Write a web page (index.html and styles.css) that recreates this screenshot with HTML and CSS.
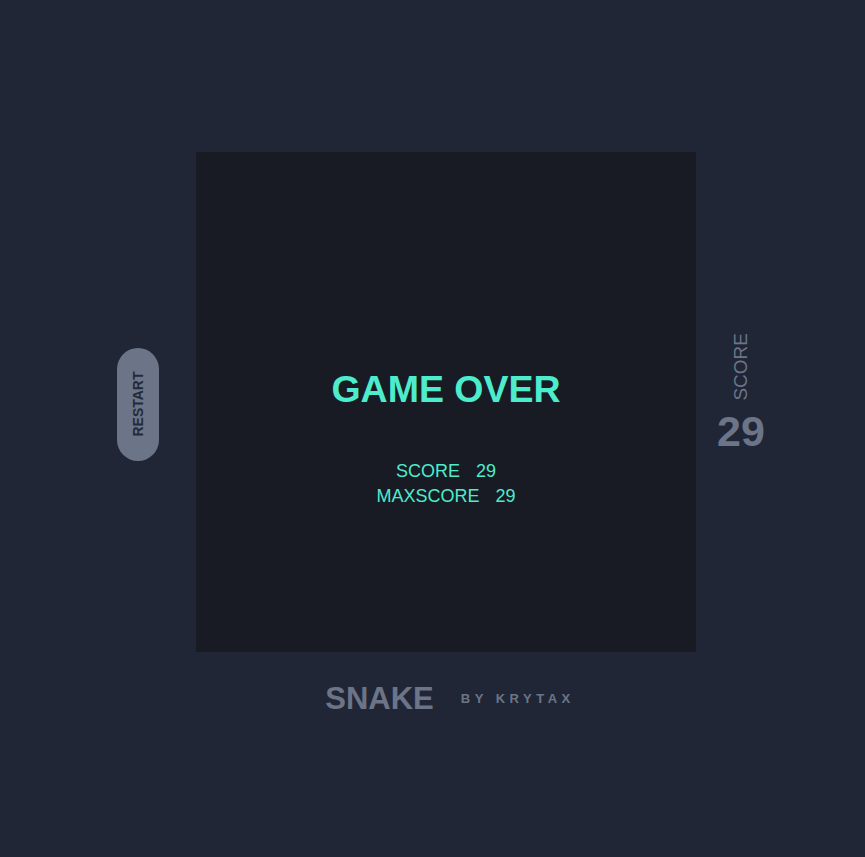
FILE: index.html
```html
<!DOCTYPE html>
<html>
<head>
<meta charset="utf-8">
<link rel="stylesheet" href="styles.css">
</head>
<body>
<div class="page">
  <div class="game">
    <div class="row">
      <div class="side-left">
        <button class="restart"><span>RESTART</span></button>
      </div>
      <div class="board">
        <div class="over">GAME OVER</div>
        <div class="stats">
          <div class="stat"><span>SCORE</span><span class="val">29</span></div>
          <div class="stat"><span>MAXSCORE</span><span class="val">29</span></div>
        </div>
      </div>
      <div class="side-right">
        <div class="score-label">SCORE</div>
        <div class="score-num">29</div>
      </div>
    </div>
    <div class="footer">
      <span class="title">SNAKE</span>
      <span class="by">BY KRYTAX</span>
    </div>
  </div>
</div>
</body>
</html>
```
FILE: styles.css
```css
html, body {
  margin: 0;
  padding: 0;
  height: 100%;
}
body {
  background: #212637;
  font-family: "Liberation Sans", Arial, sans-serif;
}
.page {
  height: 100%;
  display: flex;
  align-items: center;
  justify-content: center;
}
.game {
  display: flex;
  flex-direction: column;
  align-items: center;
  margin-left: 27px;
  margin-top: 10px;
}
.row {
  display: flex;
  align-items: center;
}
.side-left {
  width: 79px;
  display: flex;
  justify-content: flex-start;
  margin-left: -79px;
}
.restart {
  width: 42px;
  height: 113px;
  border: none;
  border-radius: 21px;
  background: #6b7587;
  color: #252a3a;
  font-family: "Liberation Sans", Arial, sans-serif;
  font-weight: bold;
  font-size: 14px;
  display: flex;
  align-items: center;
  justify-content: center;
  padding: 0;
  margin-top: 5px;
}
.restart span {
  transform: rotate(-90deg);
  white-space: nowrap;
}
.board {
  width: 500px;
  height: 500px;
  box-sizing: border-box;
  padding-top: 76px;
  background: #181a24;
  display: flex;
  flex-direction: column;
  align-items: center;
  justify-content: center;
  color: #4deccc;
}
.over {
  font-size: 37.5px;
  font-weight: bold;
  margin-top: -2px;
}
.stats {
  margin-top: 48px;
  font-size: 18px;
  line-height: 25px;
  text-align: center;
}
.stat .val {
  margin-left: 16px;
}
.side-right {
  width: 90px;
  margin-right: -90px;
  display: flex;
  flex-direction: column;
  align-items: center;
  color: #6b7587;
  margin-top: -16px;
}
.score-label {
  writing-mode: vertical-rl;
  transform: rotate(180deg);
  font-size: 19px;
}
.score-num {
  font-size: 43px;
  font-weight: bold;
  line-height: 46px;
  margin-top: 7px;
}
.footer {
  display: flex;
  align-items: center;
  margin-top: 30px;
  margin-left: 8px;
  height: 34px;
  color: #6b7587;
}
.title {
  font-size: 31px;
  font-weight: bold;
}
.by {
  font-size: 13px;
  font-weight: bold;
  letter-spacing: 4.5px;
  margin-left: 27px;
}
```
